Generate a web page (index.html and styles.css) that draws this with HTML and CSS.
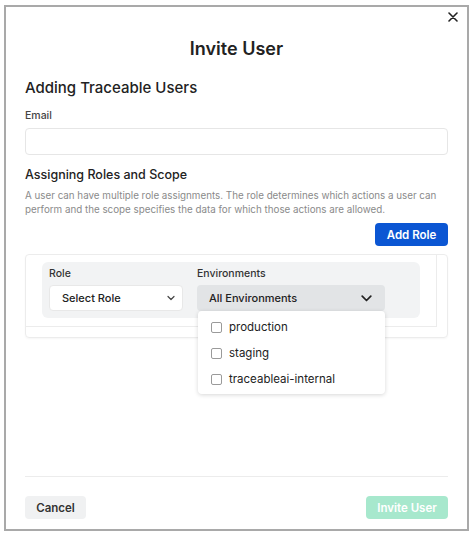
FILE: index.html
```html
<!DOCTYPE html>
<html lang="en">
<head>
<meta charset="utf-8">
<title>Invite User</title>
<link rel="stylesheet" href="styles.css">
</head>
<body>
<div class="modal">
  <button class="close" aria-label="Close">
    <svg width="10" height="10" viewBox="0 0 10 10"><path d="M1 1L9 9M9 1L1 9" stroke="#222" stroke-width="1.6" stroke-linecap="round"/></svg>
  </button>
  <div class="modal-body">
    <h1 class="title">Invite User</h1>
    <h2 class="section-title">Adding Traceable Users</h2>
    <label class="field-label">Email</label>
    <div class="input"></div>
    <h3 class="sub-title">Assigning Roles and Scope</h3>
    <p class="desc">A user can have multiple role assignments. The role determines which actions a user can perform and the scope specifies the data for which those actions are allowed.</p>
    <div class="actions-row">
      <button class="btn btn-primary">Add Role</button>
    </div>
    <div class="card">
      <div class="card-panel">
        <div class="role-row">
          <div class="col col-role">
            <div class="col-label">Role</div>
            <div class="select select-white">
              <span>Select Role</span>
              <svg width="8" height="6" viewBox="0 0 8 6"><path d="M1 1.5L4 4.5L7 1.5" fill="none" stroke="#444" stroke-width="1.2" stroke-linecap="round" stroke-linejoin="round"/></svg>
            </div>
          </div>
          <div class="col col-env">
            <div class="col-label">Environments</div>
            <div class="select select-grey">
              <span>All Environments</span>
              <svg width="11" height="7" viewBox="0 0 11 7"><path d="M1.2 1.2L5.5 5.5L9.8 1.2" fill="none" stroke="#222" stroke-width="1.7" stroke-linecap="round" stroke-linejoin="round"/></svg>
              <div class="dropdown">
                <div class="option"><span class="checkbox"></span>production</div>
                <div class="option"><span class="checkbox"></span>staging</div>
                <div class="option"><span class="checkbox"></span>traceableai-internal</div>
              </div>
            </div>
          </div>
        </div>
      </div>
    </div>
  </div>
  <div class="modal-footer">
    <button class="btn btn-secondary">Cancel</button>
    <button class="btn btn-disabled">Invite User</button>
  </div>
</div>
</body>
</html>
```
FILE: styles.css
```css
* { box-sizing: border-box; }
html, body { margin: 0; padding: 0; background: #fff; }
body {
  font-family: Inter, "Open Sans", "Liberation Sans", sans-serif;
  color: #222;
  padding: 5px 0 0 4px;
}
.modal {
  position: relative;
  width: 465px;
  height: 526px;
  border: 2px solid #a9a9a9;
  background: #fff;
  display: flex;
  flex-direction: column;
  padding: 0 19px;
}
.close {
  position: absolute;
  top: 3px;
  right: 7px;
  width: 14px;
  height: 14px;
  padding: 0;
  border: 0;
  background: none;
  display: flex;
  align-items: center;
  justify-content: center;
}
.modal-body { flex: 1; display: flex; flex-direction: column; }
.title {
  margin: 30px 0 0;
  font-size: 18px;
  line-height: 24px;
  font-weight: 600;
  text-align: center;
  color: #222;
}
.section-title {
  margin: 16px 0 0;
  font-size: 15px;
  line-height: 22px;
  font-weight: 500;
  color: #222;
}
.field-label {
  margin-top: 10px;
  font-size: 10.5px;
  line-height: 14px;
  font-weight: 500;
  color: #444;
}
.input {
  margin-top: 5px;
  height: 27px;
  border: 1px solid #e6e6e6;
  border-radius: 4px;
}
.sub-title {
  margin: 11px 0 0;
  font-size: 12.5px;
  line-height: 18px;
  font-weight: 500;
  color: #222;
}
.desc {
  margin: 5px 0 0;
  font-size: 9.8px;
  line-height: 14px;
  color: #8a8a8a;
}
.actions-row {
  margin-top: 6px;
  display: flex;
  justify-content: flex-end;
}
.btn {
  height: 23px;
  border: 0;
  border-radius: 4px;
  font-family: inherit;
  font-size: 11.5px;
  font-weight: 600;
  padding: 0;
  white-space: nowrap;
  text-align: center;
}
.btn-primary { background: #0b56d3; color: #fff; width: 73px; }
.btn-secondary { background: #f0f1f2; color: #333; width: 61px; }
.btn-disabled { background: #a7e8cd; color: #fff; width: 82px; }
.card {
  margin-top: 8px;
  height: 84px;
  border: 1px solid #ececec;
  border-radius: 4px;
  box-shadow: 0 1px 2px rgba(0,0,0,0.04);
  padding: 0 10px 11px 0;
}
.card-panel {
  height: 72px;
  border-right: 1px solid #ececec;
  border-bottom: 1px solid #ececec;
  padding: 7px 16px 7px 16px;
}
.role-row {
  background: #f2f3f4;
  border-radius: 6px;
  height: 56px;
  padding: 5px 7px 7px;
  display: flex;
  gap: 14px;
}
.col { display: flex; flex-direction: column; gap: 4px; }
.col-role { width: 134px; }
.col-env { width: 188px; }
.col-label {
  font-size: 10.5px;
  line-height: 14px;
  font-weight: 500;
  color: #333;
}
.select {
  position: relative;
  height: 26px;
  border-radius: 4px;
  display: flex;
  align-items: center;
  justify-content: space-between;
  font-size: 11px;
  font-weight: 500;
  color: #222;
}
.select-white {
  background: #fff;
  border: 1px solid #e8e8e8;
  padding: 0 7px 0 12px;
}
.select-grey {
  background: #e2e4e6;
  padding: 0 13px 0 12px;
}
.dropdown {
  position: absolute;
  top: 26px;
  left: 1px;
  width: 187px;
  background: #fff;
  border-radius: 4px;
  box-shadow: 0 1px 4px rgba(0,0,0,0.16);
  padding: 3px 0 2px;
  z-index: 2;
}
.option {
  height: 26px;
  display: flex;
  align-items: center;
  gap: 7px;
  padding-left: 13px;
  font-size: 11.5px;
  font-weight: 400;
  color: #222;
}
.checkbox {
  width: 11px;
  height: 11px;
  border: 1px solid #9a9a9a;
  border-radius: 2px;
  background: #fff;
}
.modal-footer {
  border-top: 1px solid #ececec;
  padding: 19px 0 10px;
  display: flex;
  justify-content: space-between;
}
```
